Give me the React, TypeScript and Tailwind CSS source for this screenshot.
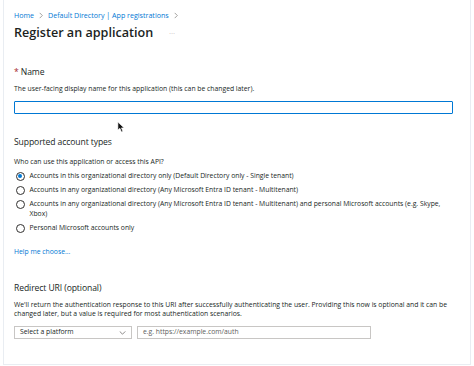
import React from "react";

const font = { fontFamily: '"Open Sans", "Noto Sans", sans-serif' };

function Radio({ checked }: { checked?: boolean }) {
  return (
    <span className="mt-[0.5px] flex h-[9px] w-[9px] shrink-0 items-center justify-center rounded-full border border-[#323130] bg-white">
      {checked && <span className="h-[4px] w-[4px] rounded-full bg-[#0078d4]" />}
    </span>
  );
}

function Chevron() {
  return (
    <svg width="6" height="7" viewBox="0 0 6 8" className="mx-[4px]">
      <path d="M1.5 1 L4.5 4 L1.5 7" fill="none" stroke="#8a8886" strokeWidth="0.9" />
    </svg>
  );
}

export default function App() {
  const options = [
    { label: "Accounts in this organizational directory only (Default Directory only - Single tenant)", checked: true },
    { label: "Accounts in any organizational directory (Any Microsoft Entra ID tenant - Multitenant)" },
    {
      label:
        "Accounts in any organizational directory (Any Microsoft Entra ID tenant - Multitenant) and personal Microsoft accounts (e.g. Skype, Xbox)",
    },
    { label: "Personal Microsoft accounts only" },
  ];
  return (
    <div className="h-[366px] w-[474px] bg-white pl-[3px] pr-[3px]" style={font}>
      <div className="relative h-[365px] w-full border-x border-b border-[#e9edf2] bg-white pl-[10px] pt-[10px] text-[#201f1e]">
        <div className="flex h-[10px] items-center text-[7.1px] leading-[10px] text-[#0078d4]">
          <span>Home</span>
          <Chevron />
          <span>Default Directory | App registrations</span>
          <Chevron />
        </div>
        <div className="mt-[4px] flex h-[18px] items-center">
          <h1 className="text-[12.6px] font-semibold leading-[18px] text-[#201f1e]">Register an application</h1>
          <span className="ml-[16px] text-[6px] leading-none tracking-[0.5px] text-[#8a8886]">···</span>
        </div>

        <div className="mt-[24px] h-[12px] text-[8.6px] leading-[12px] tracking-[-0.1px]">
          <span className="text-[#a4262c]">*</span> <span>Name</span>
        </div>
        <div className="mt-[6px] text-[6.8px] leading-[10px]">
          The user-facing display name for this application (this can be changed later).
        </div>
        <div className="mt-[7px] h-[13px] w-[439px] rounded-[1px] border-[1.5px] border-[#0078d4] bg-white" />

        <svg className="absolute left-[113px] top-[121px]" width="8" height="12" viewBox="0 0 9 13">
          <path d="M1 1 L1 10 L3.3 8 L5 12 L6.6 11.3 L5 7.5 L8 7.5 Z" fill="#111" stroke="#fff" strokeWidth="0.7" />
        </svg>

        <div className="mt-[22px] h-[12px] text-[8.6px] leading-[12px] tracking-[-0.1px]">Supported account types</div>
        <div className="mt-[9px] text-[6.8px] leading-[10px]">Who can use this application or access this API?</div>
        <div className="mt-[4px] flex flex-col gap-[4px]">
          {options.map((o, i) => (
            <div key={i} className="flex items-start gap-[5px] pl-[1.5px] text-[6.8px] leading-[10px]">
              <Radio checked={o.checked} />
              <span className="pr-[22px]">{o.label}</span>
            </div>
          ))}
        </div>
        <div className="mt-[14px] text-[6.8px] leading-[10px] text-[#0078d4]">Help me choose...</div>

        <div className="mt-[25px] h-[12px] text-[8.6px] leading-[12px] tracking-[-0.1px]">Redirect URI (optional)</div>
        <div className="mt-[6px] pr-[18px] text-[6.8px] leading-[9px]">
          We'll return the authentication response to this URI after successfully authenticating the user. Providing this now is optional and it can be changed later, but a value is required for most authentication scenarios.
        </div>
        <div className="mt-[8px] flex gap-[5px]">
          <div className="flex h-[13px] w-[118px] items-center justify-between border border-[#c8c6c4] pl-[5px] pr-[5px] text-[6.8px]">
            <span>Select a platform</span>
            <svg width="7" height="4" viewBox="0 0 8 5">
              <path d="M0.5 0.5 L4 4 L7.5 0.5" fill="none" stroke="#605e5c" strokeWidth="0.9" />
            </svg>
          </div>
          <div className="flex h-[13px] w-[234px] items-center border border-[#c8c6c4] px-[5px] text-[6.8px] text-[#605e5c]">
            e.g. https://example.com/auth
          </div>
        </div>
      </div>
    </div>
  );
}
